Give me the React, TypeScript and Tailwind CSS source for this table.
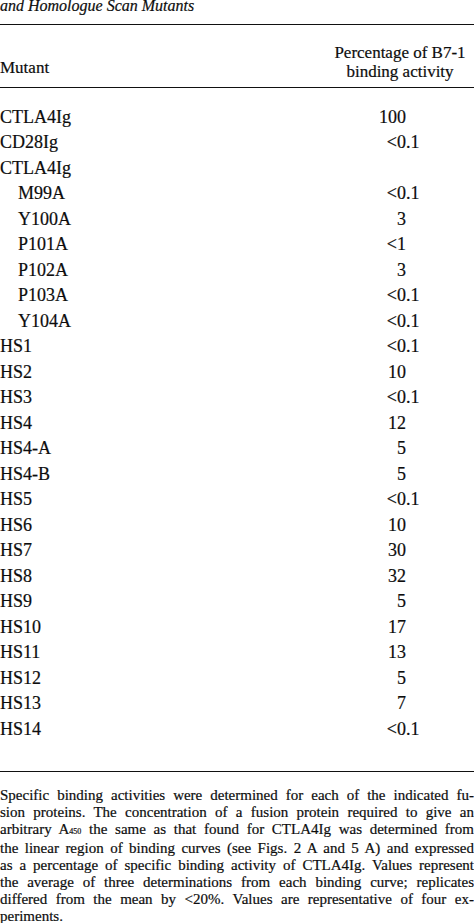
const rows: { name: string; value: string; indent?: boolean }[] = [
  { name: 'CTLA4Ig', value: '100' },
  { name: 'CD28Ig', value: '<0.1' },
  { name: 'CTLA4Ig', value: '' },
  { name: 'M99A', value: '<0.1', indent: true },
  { name: 'Y100A', value: '3', indent: true },
  { name: 'P101A', value: '<1', indent: true },
  { name: 'P102A', value: '3', indent: true },
  { name: 'P103A', value: '<0.1', indent: true },
  { name: 'Y104A', value: '<0.1', indent: true },
  { name: 'HS1', value: '<0.1' },
  { name: 'HS2', value: '10' },
  { name: 'HS3', value: '<0.1' },
  { name: 'HS4', value: '12' },
  { name: 'HS4-A', value: '5' },
  { name: 'HS4-B', value: '5' },
  { name: 'HS5', value: '<0.1' },
  { name: 'HS6', value: '10' },
  { name: 'HS7', value: '30' },
  { name: 'HS8', value: '32' },
  { name: 'HS9', value: '5' },
  { name: 'HS10', value: '17' },
  { name: 'HS11', value: '13' },
  { name: 'HS12', value: '5' },
  { name: 'HS13', value: '7' },
  { name: 'HS14', value: '<0.1' },
];

function Value({ v }: { v: string }) {
  const dot = v.indexOf('.');
  const whole = dot === -1 ? v : v.slice(0, dot);
  const frac = dot === -1 ? '' : v.slice(dot);
  return (
    <div className="flex">
      <span className="w-[80px] text-right">{whole}</span>
      <span>{frac}</span>
    </div>
  );
}

const notes = [
  'Specific binding activities were determined for each of the indicated fu-',
  'sion proteins. The concentration of a fusion protein required to give an',
  null,
  'the linear region of binding curves (see Figs. 2 A and 5 A) and expressed',
  'as a percentage of specific binding activity of CTLA4Ig. Values represent',
  'the average of three determinations from each binding curve; replicates',
  'differed from the mean by <20%. Values are representative of four ex-',
];

export default function App() {
  return (
    <div className="w-[474px] h-[923px] overflow-hidden bg-white text-[#0d0d0d] font-['Liberation_Serif',serif] [-webkit-text-stroke:0.2px]">
      {/* Title (cut by the top edge, as in the scan) */}
      <div className="h-[24px] overflow-hidden">
        <p className="-mt-[4px] text-[16px] leading-[20px] italic">and Homologue Scan Mutants</p>
      </div>
      <div className="border-t-[1.5px] border-[#111]" />

      {/* Header */}
      <div className="flex h-[62px]">
        <div className="flex-1 flex items-end pb-[10px] text-[17px] leading-[19px]">Mutant</div>
        <div className="w-[148px] pt-[18px] text-center text-[17px] leading-[19px] whitespace-nowrap">
          <div>Percentage of B7-1</div>
          <div>binding activity</div>
        </div>
      </div>
      <div className="border-t-[1.5px] border-[#111]" />

      {/* Rows */}
      <div className="pt-[16px] text-[18px]">
        {rows.map((r, i) => (
          <div key={i} className="flex h-[25.5px] items-center leading-none">
            <div className={r.indent ? 'flex-1 pl-[18px]' : 'flex-1'}>{r.name}</div>
            <div className="w-[148px]">{r.value && <Value v={r.value} />}</div>
          </div>
        ))}
      </div>
      <div className="mt-[29px] border-t-[1.5px] border-[#111]" />

      {/* Footnote */}
      <div className="mt-[15px] text-[15px] leading-[17px]">
        {notes.map((line, i) =>
          line === null ? (
            <div key={i} className="text-justify [text-align-last:justify] whitespace-nowrap">
              arbitrary A<span className="text-[8px]">450</span> the same as that found for CTLA4Ig was determined from
            </div>
          ) : (
            <div key={i} className="text-justify [text-align-last:justify] whitespace-nowrap">
              {line}
            </div>
          )
        )}
        <div>periments.</div>
      </div>
    </div>
  );
}
